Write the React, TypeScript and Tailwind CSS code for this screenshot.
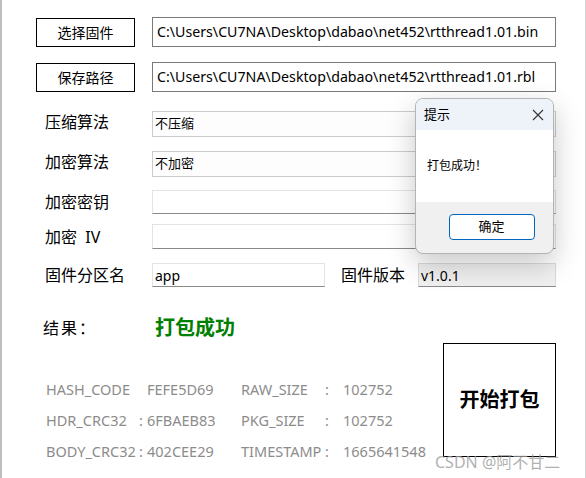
export default function App() {
  const stats = [
    { k1: 'HASH_CODE', c1: '', v1: 'FEFE5D69', k2: 'RAW_SIZE', c2: ':', v2: '102752' },
    { k1: 'HDR_CRC32', c1: ':', v1: '6FBAEB83', k2: 'PKG_SIZE', c2: ':', v2: '102752' },
    { k1: 'BODY_CRC32', c1: ':', v1: '402CEE29', k2: 'TIMESTAMP', c2: ':', v2: '1665641548' },
  ]

  return (
    <div className="relative w-[586px] h-[478px] overflow-hidden bg-white border-l-2 border-l-[#bdbdbd] border-r border-r-[#d4d4d4] pt-[17px] pl-[34px] text-black [font-family:'Noto_Sans','Noto_Sans_CJK_SC',sans-serif]">
      {/* 文件路径 */}
      <div className="flex items-center h-[30px]">
        <button className="w-[99px] h-[29px] border border-black bg-white text-[14px]">选择固件</button>
        <div className="ml-[17px] w-[404px] h-[30px] border border-[#7a7a7a] bg-white px-[4px] flex items-center text-[14.2px] whitespace-nowrap overflow-hidden">
          C:\Users\CU7NA\Desktop\dabao\net452\rtthread1.01.bin
        </div>
      </div>
      <div className="flex items-center h-[30px] mt-[15px]">
        <button className="w-[99px] h-[29px] border border-black bg-white text-[14px]">保存路径</button>
        <div className="ml-[17px] w-[404px] h-[30px] border border-[#7a7a7a] bg-white px-[4px] flex items-center text-[14.2px] whitespace-nowrap overflow-hidden">
          C:\Users\CU7NA\Desktop\dabao\net452\rtthread1.01.rbl
        </div>
      </div>

      {/* 算法 */}
      <div className="flex items-center h-[26px] mt-[19px]">
        <div className="w-[116px] pl-[9px] text-[16px] mb-[4px]">压缩算法</div>
        <div className="w-[404px] h-[26px] border border-[#cccccc] bg-[#fdfdfd] px-[2px] flex items-center text-[13px]">不压缩</div>
      </div>
      <div className="flex items-center h-[26px] mt-[14px]">
        <div className="w-[116px] pl-[9px] text-[16px] mb-[4px]">加密算法</div>
        <div className="w-[404px] h-[26px] border border-[#cccccc] bg-[#fdfdfd] px-[2px] flex items-center text-[13px]">不加密</div>
      </div>
      <div className="flex items-center h-[24px] mt-[13px]">
        <div className="w-[116px] pl-[9px] text-[16px]">加密密钥</div>
        <div className="w-[404px] h-[24px] border border-[#e3e3e3] border-b-[#8a8a8a] bg-white" />
      </div>
      <div className="flex items-center h-[25px] mt-[10px]">
        <div className="w-[116px] pl-[9px] text-[16px] whitespace-pre">加密  IV</div>
        <div className="w-[404px] h-[25px] border border-[#e3e3e3] border-b-[#8a8a8a] bg-white" />
      </div>
      <div className="flex items-center h-[24px] mt-[14px]">
        <div className="w-[116px] pl-[9px] text-[16px]">固件分区名</div>
        <div className="w-[173px] h-[24px] border border-[#e3e3e3] border-b-[#8a8a8a] bg-white px-[2px] flex items-center text-[14px]">app</div>
        <div className="ml-[16px] w-[77px] text-[16px]">固件版本</div>
        <div className="w-[138px] h-[24px] border border-[#d9d9d9] border-b-[#8a8a8a] bg-[#f0f0f0] px-[2px] flex items-center text-[14px]">v1.0.1</div>
      </div>

      {/* 结果 */}
      <div className="flex">
        <div className="w-[407px] flex flex-col">
          <div className="flex items-center h-[24px] mt-[29px]">
            <div className="w-[119px] pl-[7px] text-[16px] tracking-[2px]">结果：</div>
            <div className="text-[20px] font-bold text-[#008000]">打包成功</div>
          </div>
          <div className="mt-[40px] ml-[10px] grid grid-cols-[101px_94px_102px_auto] auto-rows-[20px] gap-y-[11px] text-[14.5px] text-[#8c8c8c] items-center">
            {stats.map((s) => (
              <div key={s.k1} className="contents">
                <div className="flex justify-between pr-[4px]">
                  <span>{s.k1}</span>
                  <span>{s.c1}</span>
                </div>
                <div>{s.v1}</div>
                <div className="flex justify-between pr-[14px]">
                  <span>{s.k2}</span>
                  <span>{s.c2}</span>
                </div>
                <div>{s.v2}</div>
              </div>
            ))}
          </div>
        </div>
        <button className="mt-[56px] w-[113px] h-[114px] border border-black bg-white text-[20px] font-bold">开始打包</button>
      </div>

      {/* 提示框 */}
      <div className="absolute left-[413px] top-[98px] w-[139px] h-[156px] rounded-[8px] border border-[#b4b4b4] bg-[#f0f0f0] overflow-hidden flex flex-col shadow-[0_10px_28px_rgba(0,0,0,0.22)]">
        <div className="h-[31px] bg-[#eef3fa] flex items-center justify-between pl-[8px] pr-[9px] text-[13px]">
          <span>提示</span>
          <svg width="12" height="12" viewBox="0 0 12 12" fill="none" stroke="#333" strokeWidth="1.1">
            <path d="M1 1L11 11M11 1L1 11" />
          </svg>
        </div>
        <div className="h-[72px] bg-white flex items-center pl-[11px] text-[12px]">打包成功！</div>
        <div className="flex-1 flex items-center justify-center pl-[14px] pb-[1px]">
          <button className="w-[86px] h-[26px] rounded-[4px] border border-[#0067c0] bg-white text-[13px]">确定</button>
        </div>
      </div>

      {/* 水印 */}
      <div className="absolute left-[433px] top-[450px] text-[16px] text-[#9c9c9c]/80 whitespace-nowrap">CSDN @阿不甘二</div>
    </div>
  )
}
